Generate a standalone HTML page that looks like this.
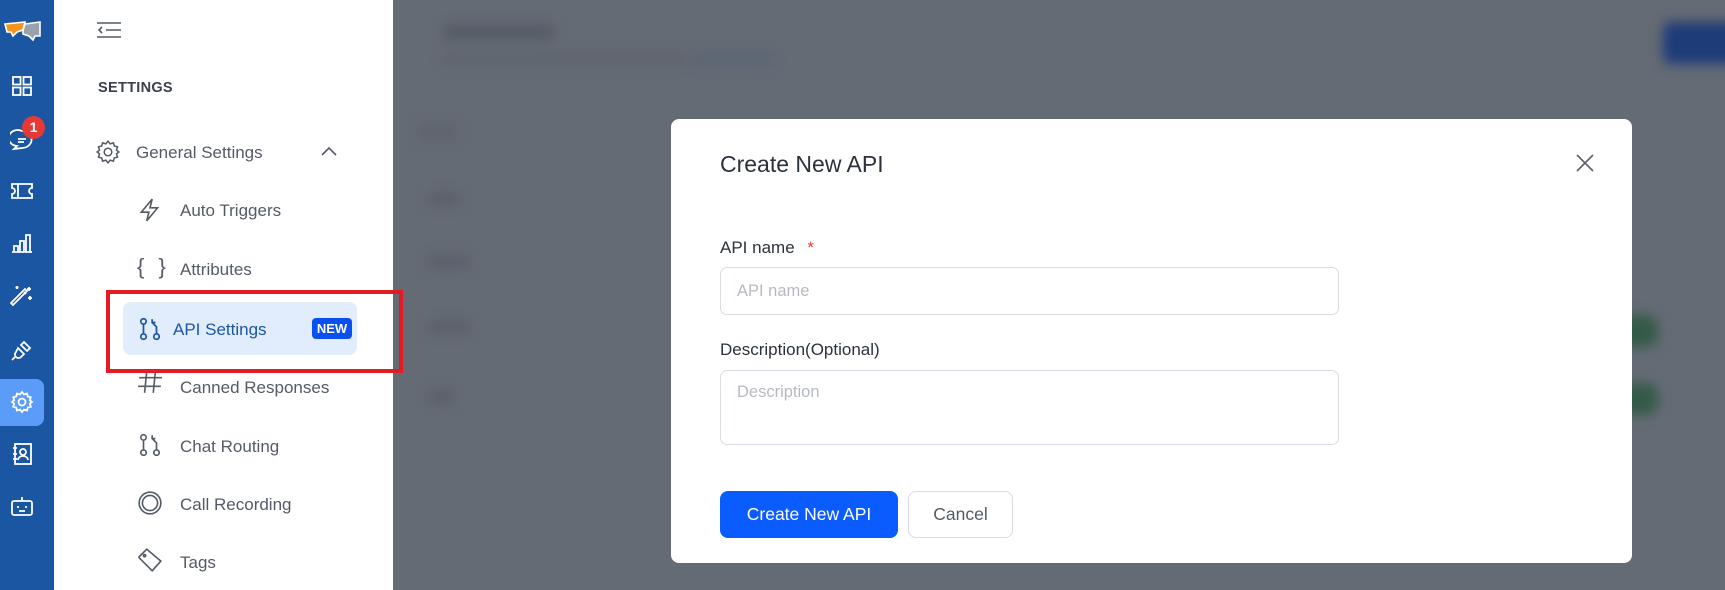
<!DOCTYPE html>
<html><head><meta charset="utf-8"><style>
*{box-sizing:border-box;margin:0;padding:0}
body{width:1725px;height:590px;overflow:hidden;position:relative;font-family:"Liberation Sans",sans-serif;background:#fff}
.bar{position:absolute;left:0;top:0;width:54px;height:590px;background:#1b56a2}
.ic{position:absolute;left:10px;width:24px;height:24px}
.panel{position:absolute;left:54px;top:0;width:339px;height:590px;background:#fff}
.t{position:absolute;font-size:17px;color:#545b66;white-space:nowrap}
.si{position:absolute;left:137px;width:26px;height:26px}
.ov{position:absolute;left:393px;top:0;width:1332px;height:590px;background:#656b75;overflow:hidden}
.blur{position:absolute;filter:blur(6px)}
.modal{position:absolute;left:671px;top:119px;width:961px;height:444px;background:#fff;border-radius:8px}
.lbl{position:absolute;left:49px;font-size:17px;color:#2c323b}
.inp{position:absolute;left:49px;width:619px;border:1px solid #d9dbe5;border-radius:7px;font-size:16.5px;color:#b7bac2;padding-left:16px}
</style></head><body>
<div class="bar">
<svg class="ic" style="top:18px;left:3px;width:40px;height:24px" viewBox="0 0 40 24"><path d="M2 6 L22 4 L20 12 L14 14 L10 18 L8 14 L4 14Z" fill="#f7931e" stroke="#fff" stroke-width="1.6"/><path d="M22 6 L37 4 L37 18 L32 18 L30 22 L26 18 L20 16 L20 12Z" fill="#9aa3ad" stroke="#fff" stroke-width="1.6"/></svg>
<svg class="ic" style="top:74px" viewBox="0 0 24 24" fill="none" stroke="#fff" stroke-width="1.8"><rect x="3" y="3" width="7.5" height="7.5"/><rect x="13.5" y="3" width="7.5" height="7.5"/><rect x="3" y="13.5" width="7.5" height="7.5"/><rect x="13.5" y="13.5" width="7.5" height="7.5"/></svg>
<svg class="ic" style="top:128px" viewBox="0 0 24 24" fill="none" stroke="#fff" stroke-width="1.8"><path d="M12 3a9 8 0 1 0-5 15l-3 3 8-1a9 8 0 0 0 0-17z"/><path d="M8 11h8M8 14h6"/></svg>
<div style="position:absolute;left:22px;top:116px;width:23px;height:23px;border-radius:50%;background:#e53935;color:#fff;font-weight:bold;font-size:14px;text-align:center;line-height:23px">1</div>
<svg class="ic" style="top:179px" viewBox="0 0 24 24" fill="none" stroke="#fff" stroke-width="1.8"><path d="M2 5h20v4a3 3 0 0 0 0 6v4H2v-4a3 3 0 0 0 0-6z"/><path d="M8 5v14"/></svg>
<svg class="ic" style="top:231px" viewBox="0 0 24 24" fill="none" stroke="#fff" stroke-width="1.8"><path d="M2 21h20M4 21v-6h4v6M10 21V10h4v11M16 21V4h4v17"/></svg>
<svg class="ic" style="top:284px" viewBox="0 0 24 24" fill="none" stroke="#fff" stroke-width="1.8"><path d="M3 21L17 7l-2-2L1 19zM14 8l2 2M19 3v4M17 5h4M20 12v4M18 14h4M7 2v3M5.5 3.5h3"/></svg>
<svg class="ic" style="top:338px" viewBox="0 0 24 24" fill="none" stroke="#fff" stroke-width="1.8"><path d="M8 10l6 6-3 3a3 3 0 0 1-5-5zM6 18l-4 4M14 4l-3 3M20 10l-3 3M11 7l6 6 3-3-6-6z"/></svg>
<div style="position:absolute;left:0;top:379px;width:44px;height:47px;background:#5b9cf8;border-radius:0 8px 8px 0"></div>
<svg class="ic" style="top:390px" viewBox="0 0 24 24" fill="none" stroke="#fff" stroke-width="1.8"><circle cx="12" cy="12" r="3.5"/><path d="M12 2l2 2.5 3-1 .8 3 3 .8-1 3L22 12l-2.2 1.7 1 3-3 .8-.8 3-3-1L12 22l-2-2.5-3 1-.8-3-3-.8 1-3L2 12l2.2-1.7-1-3 3-.8.8-3 3 1z"/></svg>
<svg class="ic" style="top:442px" viewBox="0 0 24 24" fill="none" stroke="#fff" stroke-width="1.8"><rect x="5" y="2" width="16" height="20"/><circle cx="13" cy="10" r="3"/><path d="M8 18a5 4 0 0 1 10 0M3 6h4M3 12h4M3 17h4"/></svg>
<svg class="ic" style="top:494px" viewBox="0 0 24 24" fill="none" stroke="#fff" stroke-width="1.8"><rect x="2" y="7" width="20" height="14" rx="2"/><path d="M12 3v4M8 12v2M16 12v2M9 17h6"/></svg>
</div>
<div class="panel">
<svg style="position:absolute;left:43px;top:22px" width="24" height="16" viewBox="0 0 24 16" fill="none" stroke="#545b66" stroke-width="1.6"><path d="M0 1h24M9 8h15M0 15h24M5 5L2 8l3 3"/></svg>
<div class="t" style="left:44px;top:80px;font-size:14.5px;font-weight:bold;color:#3a414c;letter-spacing:.3px">SETTINGS</div>
<svg style="position:absolute;left:41px;top:139px" width="26" height="26" viewBox="0 0 24 24" fill="none" stroke="#545b66" stroke-width="1.4"><circle cx="12" cy="12" r="3.5"/><path d="M12 2l2 2.5 3-1 .8 3 3 .8-1 3L22 12l-2.2 1.7 1 3-3 .8-.8 3-3-1L12 22l-2-2.5-3 1-.8-3-3-.8 1-3L2 12l2.2-1.7-1-3 3-.8.8-3 3 1z"/></svg>
<div class="t" style="left:82px;top:143px">General Settings</div>
<svg style="position:absolute;left:267px;top:146px" width="16" height="10" viewBox="0 0 16 10" fill="none" stroke="#545b66" stroke-width="1.6"><path d="M1 9l7-7 7 7"/></svg>
<svg class="si" style="left:83px;top:197px" viewBox="0 0 24 24" fill="none" stroke="#545b66" stroke-width="1.5"><path d="M14 2L4 14h7l-2 8 10-12h-7z"/></svg>
<div class="t" style="left:126px;top:201px">Auto Triggers</div>
<div class="t" style="left:83px;top:254px;font-size:22px;letter-spacing:4px">{ }</div>
<div class="t" style="left:126px;top:260px">Attributes</div>
<div style="position:absolute;left:69px;top:302px;width:234px;height:53px;background:#e1ecfc;border-radius:8px"></div>
<svg class="si" style="left:83px;top:316px" viewBox="0 0 24 24" fill="none" stroke="#1b56a2" stroke-width="1.6"><circle cx="6" cy="5" r="2.5"/><circle cx="6" cy="19" r="2.5"/><circle cx="18" cy="19" r="2.5"/><path d="M6 8v8M18 16v-6l-4-4M14 3v3h3"/></svg>
<div class="t" style="left:119px;top:320px;color:#1b56a2">API Settings</div>
<div style="position:absolute;left:258px;top:318px;width:40px;height:21px;background:#0b4ff0;border-radius:4px;color:#fff;font-weight:bold;font-size:13px;text-align:center;line-height:21px">NEW</div>
<svg class="si" style="left:83px;top:369px" viewBox="0 0 24 24" fill="none" stroke="#545b66" stroke-width="1.5"><path d="M9 2L7 22M17 2l-2 20M2 8h21M1 16h21"/></svg>
<div class="t" style="left:126px;top:378px">Canned Responses</div>
<svg class="si" style="left:83px;top:432px" viewBox="0 0 24 24" fill="none" stroke="#545b66" stroke-width="1.5"><circle cx="6" cy="5" r="2.5"/><circle cx="6" cy="19" r="2.5"/><circle cx="18" cy="19" r="2.5"/><path d="M6 8v8M18 16v-6l-4-4M14 3v3h3"/></svg>
<div class="t" style="left:126px;top:437px">Chat Routing</div>
<svg class="si" style="left:83px;top:490px" viewBox="0 0 24 24" fill="none" stroke="#545b66" stroke-width="1.5"><circle cx="12" cy="12" r="10"/><circle cx="12" cy="12" r="7"/></svg>
<div class="t" style="left:126px;top:495px">Call Recording</div>
<svg class="si" style="left:83px;top:547px" viewBox="0 0 24 24" fill="none" stroke="#545b66" stroke-width="1.5"><path d="M2 9l7-7h0l13 11-8 9L2 10z"/><circle cx="7" cy="8" r="1"/></svg>
<div class="t" style="left:126px;top:553px">Tags</div>
</div>
<div class="ov">
<div class="blur" style="left:50px;top:26px;width:110px;height:12px;background:#525862"></div>
<div class="blur" style="left:50px;top:55px;width:240px;height:8px;background:#5c626c"></div>
<div class="blur" style="left:300px;top:55px;width:80px;height:8px;background:#566374"></div>
<div class="blur" style="left:1270px;top:22px;width:90px;height:42px;background:#1d3c78;border-radius:8px"></div>
<div class="blur" style="left:25px;top:125px;width:40px;height:14px;background:#5e646e"></div>
<div class="blur" style="left:36px;top:194px;width:30px;height:10px;background:#575d67"></div>
<div class="blur" style="left:36px;top:257px;width:40px;height:10px;background:#575d67"></div>
<div class="blur" style="left:36px;top:322px;width:40px;height:10px;background:#575d67"></div>
<div class="blur" style="left:36px;top:392px;width:25px;height:10px;background:#575d67"></div>
<div class="blur" style="left:1225px;top:315px;width:40px;height:32px;background:#335a48;border-radius:12px"></div>
<div class="blur" style="left:1225px;top:383px;width:40px;height:32px;background:#335a48;border-radius:12px"></div>
</div>
<div style="position:absolute;left:106px;top:290px;width:297px;height:83px;border:4px solid #e51b24;z-index:5"></div>
<div class="modal">
<div style="position:absolute;left:49px;top:32px;font-size:23px;color:#2c323b">Create New API</div>
<svg style="position:absolute;left:905px;top:35px" width="18" height="18" viewBox="0 0 18 18" stroke="#5a616b" stroke-width="1.6"><path d="M1 1l16 16M17 1L1 17"/></svg>
<div class="lbl" style="top:119px">API name <span style="color:#e53935;margin-left:8px">*</span></div>
<div class="inp" style="top:148px;height:48px;line-height:46px">API name</div>
<div class="lbl" style="top:221px">Description(Optional)</div>
<div class="inp" style="top:251px;height:75px;padding-top:12px">Description</div>
<div style="position:absolute;left:49px;top:372px;width:178px;height:47px;background:#0b5cff;border-radius:8px;color:#fff;font-size:17.5px;text-align:center;line-height:47px">Create New API</div>
<div style="position:absolute;left:237px;top:372px;width:105px;height:47px;border:1px solid #d9dbe5;border-radius:8px;color:#545b66;font-size:17.5px;text-align:center;line-height:45px">Cancel</div>
</div>
</body></html>
